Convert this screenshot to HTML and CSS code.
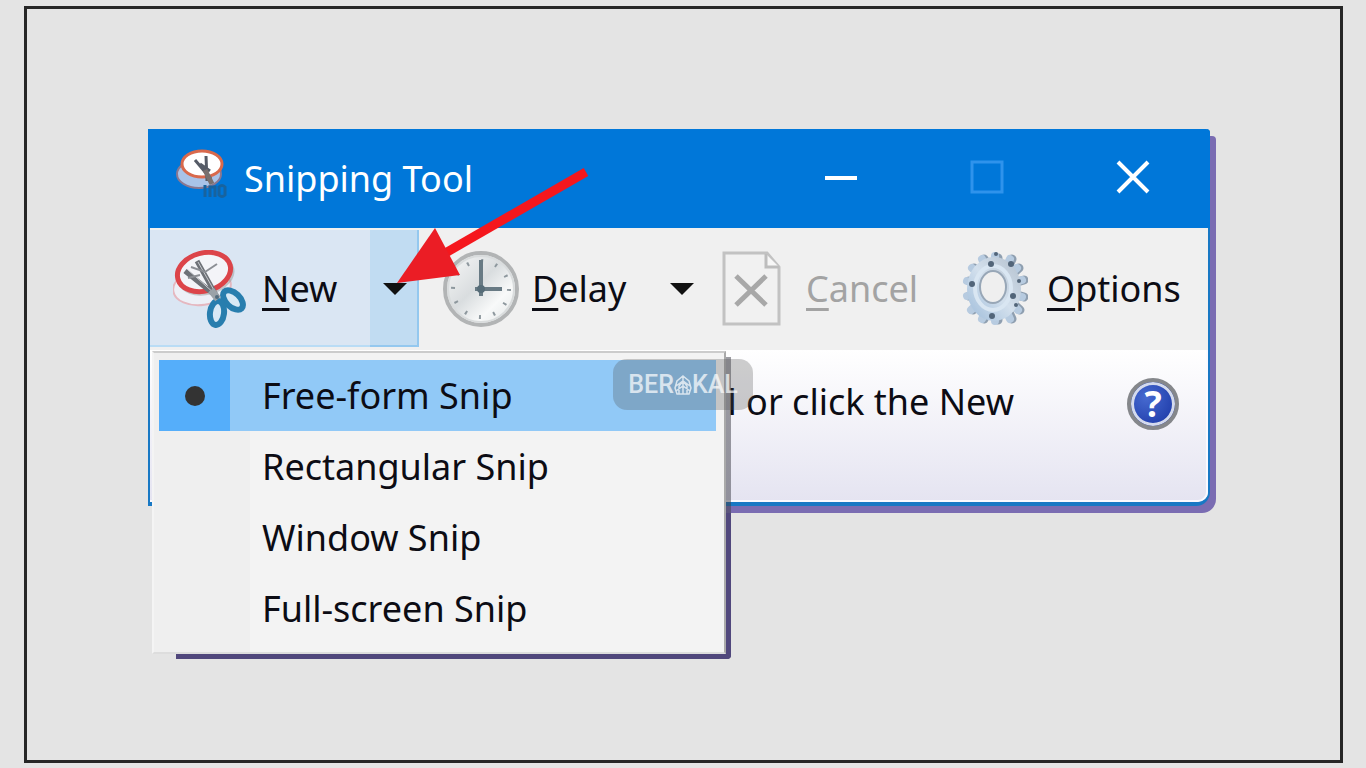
FILE: index.html
```html
<!DOCTYPE html>
<html lang="en">
<head>
    <meta charset="UTF-8">
    <meta name="viewport" content="width=device-width, initial-scale=1.0">
    <title>Snipping Tool</title>
    <link rel="stylesheet" href="styles.css">
</head>
<body>
    <main class="frame">
        <section class="window">
            <header class="title-bar">
                <svg class="app-icon" viewBox="0 0 52 52">
                    <ellipse cx="23" cy="25" rx="22" ry="14" fill="#a9c3e8" stroke="#8b7790" stroke-width="2"/>
                    <ellipse cx="26" cy="15" rx="20" ry="13" fill="#fff" stroke="#d9694c" stroke-width="3"/>
                    <path d="M19 11l16 19M30 7l1 25M24 15l10 7" stroke="#555b66" stroke-width="3" fill="none"/>
                    <path d="M29 21l7 14" stroke="#79706f" stroke-width="5"/>
                    <path d="M29 36v12M34 48V38h5v10M43 37v9q3 3 6 0v-8q-3-3-6 0" stroke="#17639f" stroke-width="3" fill="none"/>
                </svg>
                <h1>Snipping Tool</h1>
                <div class="window-buttons">
                    <button type="button" aria-label="Minimize">
                        <svg viewBox="0 0 34 34"><path d="M1 18h32" stroke="#fff" stroke-width="4"/></svg>
                    </button>
                    <button type="button" aria-label="Maximize" disabled>
                        <svg viewBox="0 0 34 34"><rect x="2" y="2" width="30" height="30" fill="none" stroke="#2f93ec" stroke-width="3"/></svg>
                    </button>
                    <button type="button" aria-label="Close">
                        <svg viewBox="0 0 34 34"><path d="M2 2l30 30M32 2L2 32" stroke="#fff" stroke-width="4"/></svg>
                    </button>
                </div>
            </header>

            <div class="toolbar">
                <button type="button" class="tool tool-new">
                    <svg class="icon-new" viewBox="0 0 74 78">
                        <ellipse cx="29" cy="37" rx="29" ry="18" fill="#edf0f7" stroke="#e5b8c0" stroke-width="2" transform="rotate(-8 29 37)"/>
                        <ellipse cx="33" cy="25" rx="29" ry="20" fill="#999" opacity=".5" transform="rotate(-15 33 25)"/>
                        <ellipse cx="31" cy="22" rx="27" ry="19" fill="#f3f4f8" stroke="#dc4449" stroke-width="5" transform="rotate(-15 31 22)"/>
                        <path d="M12 21l31 25M24 11l20 36" stroke="#6d7177" stroke-width="5"/>
                        <path d="M14 19l28 25M25 12l17 30" stroke="#c8cbd0" stroke-width="1"/>
                        <path d="M15 28l12-3M18 17l14 5 12-8" stroke="#8b8e94" stroke-width="2" fill="none"/>
                        <ellipse cx="60" cy="50" rx="7" ry="12" fill="#d8e9f5" stroke="#287eae" stroke-width="6" transform="rotate(-46 60 50)"/>
                        <ellipse cx="44" cy="63" rx="7" ry="12" fill="#d8e9f5" stroke="#287eae" stroke-width="6" transform="rotate(7 44 63)"/>
                        <path d="M38 40l7 9" stroke="#9ba2a8" stroke-width="7"/>
                        <circle cx="44" cy="47" r="2" fill="#536b7c"/>
                    </svg>
                    <span><u>N</u>ew</span>
                </button>
                <button type="button" class="split split-open" aria-label="New snip mode">
                    <svg class="caret" viewBox="0 0 24 12"><path d="M0 0h24L12 12z" fill="#111"/></svg>
                </button>
                <button type="button" class="tool tool-delay">
                    <svg class="icon-delay" viewBox="0 0 76 76">
                        <defs>
                            <linearGradient id="face" x1="0" y1="0" x2="1" y2="1">
                                <stop offset="0" stop-color="#fafafa"/>
                                <stop offset=".45" stop-color="#d9dddf"/>
                                <stop offset=".7" stop-color="#f8f9f9"/>
                                <stop offset="1" stop-color="#dfe3e5"/>
                            </linearGradient>
                        </defs>
                        <circle cx="38" cy="38" r="36" fill="url(#face)" stroke="#b2b4b5" stroke-width="4"/>
                        <circle cx="38" cy="38" r="33" fill="none" stroke="#d9dcdd" stroke-width="2"/>
                        <circle cx="38" cy="38" r="28" fill="none" stroke="#8e989e" stroke-width="4" stroke-dasharray="2 12.66"/>
                        <path d="M38 9v36M32 38h27" stroke="#687a84" stroke-width="4"/>
                        <circle cx="38" cy="38" r="4" fill="#566c78"/>
                    </svg>
                    <span><u>D</u>elay</span>
                </button>
                <button type="button" class="split" aria-label="Delay time">
                    <svg class="caret" viewBox="0 0 24 12"><path d="M0 0h24L12 12z" fill="#111"/></svg>
                </button>
                <button type="button" class="tool tool-cancel" disabled>
                    <svg class="icon-cancel" viewBox="0 0 59 76">
                        <path d="M2 2h43l12 14v57H2z" fill="#f1f1f1" stroke="#c2c2c2" stroke-width="3"/>
                        <path d="M44 3v13h13" fill="#f7f7f7" stroke="#bdbdbd" stroke-width="3"/>
                        <path d="M14 25l30 29M44 25L14 54" stroke="#a8a8a8" stroke-width="5"/>
                    </svg>
                    <span><u>C</u>ancel</span>
                </button>
                <button type="button" class="tool tool-options">
                    <svg class="icon-options" viewBox="0 0 66 78">
                        <defs>
                            <linearGradient id="metal" x1="0" y1="1" x2="1" y2="0">
                                <stop offset="0" stop-color="#9dbbd9"/>
                                <stop offset=".5" stop-color="#d3e0ed"/>
                                <stop offset="1" stop-color="#b3bfcc"/>
                            </linearGradient>
                        </defs>
                        <g id="teeth" fill="none" stroke="#8f9fb0" stroke-width="9" stroke-linecap="round">
                            <path d="M36 8v62M22 9l28 60M12 18l46 42M7 31l55 16M7 46l55-16M11 60l46-42M22 69L50 9"/>
                        </g>
                        <g fill="none" stroke="#b7cbe0" stroke-width="8" stroke-linecap="round">
                            <path d="M33 6v65M20 9l28 60M10 18l46 42M5 31l55 16M5 46l55-16M9 60l46-42M20 69L48 9"/>
                        </g>
                        <ellipse cx="32" cy="39" rx="27" ry="32" fill="url(#metal)"/>
                        <ellipse cx="31" cy="38" rx="18" ry="22" fill="none" stroke="#d9e6f2" stroke-width="4"/>
                        <ellipse cx="31" cy="37" rx="13" ry="16" fill="#efefef" stroke="#98a7b7" stroke-width="2"/>
                        <g fill="#526579">
                            <circle cx="29" cy="14" r="3"/><circle cx="10" cy="34" r="3"/>
                            <circle cx="51" cy="46" r="3"/><circle cx="30" cy="66" r="3"/>
                            <circle cx="49" cy="14" r="3"/><circle cx="34" cy="4" r="2"/>
                            <circle cx="54" cy="55" r="2"/><circle cx="57" cy="31" r="2"/>
                        </g>
                    </svg>
                    <span><u>O</u>ptions</span>
                </button>
            </div>

            <div class="hint">
                <p>l or click the New</p>
                <button type="button" class="help" aria-label="Help">?</button>
            </div>

            <!-- snip mode menu -->
            <form class="menu">
                <label><input type="radio" name="mode" checked><span>Free-form Snip</span></label>
                <label><input type="radio" name="mode"><span>Rectangular Snip</span></label>
                <label><input type="radio" name="mode"><span>Window Snip</span></label>
                <label><input type="radio" name="mode"><span>Full-screen Snip</span></label>
            </form>

            <svg class="arrow" viewBox="0 0 194 116">
                <path d="M189 4L45 87" stroke="#f5171d" stroke-width="9"/>
                <path d="M0 115L38 60 63 107z" fill="#eb1d25"/>
            </svg>

            <div class="watermark">
                <span>BER</span>
                <svg viewBox="0 0 18 20">
                    <path d="M9 1l6 5 2 7-2 6H3l-2-6 2-7zM9 1v18M5 19v-8l4-5 4 5v8M2 11l7-5 7 5M2 16l7-5 7 5" fill="none" stroke="#fff" stroke-width="1.5"/>
                </svg>
                <span>KAL</span>
            </div>
        </section>
    </main>
</body>
</html>
```

FILE: styles.css
```css
* {
    box-sizing: border-box;
}
body {
    margin: 0;
    padding: 6px 23px 5px 24px;
    min-height: 100vh;
    display: flex;
    background: #e4e4e4;
    color: #0c0c14;
    font-family: "Noto Sans", "Open Sans", sans-serif;
    font-size: 36px;
    line-height: 48px;
}
button {
    margin: 0;
    padding: 0;
    border: none;
    background: none;
    color: inherit;
    font: inherit;
}
svg {
    display: block;
    flex: none;
}
.frame {
    flex: 1;
    padding: 120px 130px 0 121px;
    border: 3px solid #262626;
}
.window {
    position: relative;
    border: solid #1878c4;
    border-width: 0 2px 4px;
    border-radius: 0 4px 14px 0;
    background: #f0f0f0;
    box-shadow: 6px 7px 0 #7a6cb2;
}

/* title bar */
.title-bar {
    display: flex;
    align-items: center;
    height: 99px;
    margin: 0 -2px;
    padding: 0 4px 0 28px;
    border-radius: 0 4px 0 0;
    background: #0077d9;
    color: #fff;
}
.app-icon {
    width: 52px;
    height: 52px;
    margin-bottom: 8px;
}
.title-bar h1 {
    flex: 1;
    margin: 0 0 0 16px;
    font-size: 36px;
    font-weight: 400;
}
.window-buttons {
    display: flex;
    align-self: flex-start;
}
.window-buttons button {
    display: flex;
    align-items: center;
    justify-content: center;
    width: 146px;
    height: 96px;
}
.window-buttons svg {
    width: 34px;
    height: 34px;
}

/* toolbar */
.toolbar {
    display: grid;
    grid-template-columns: 220fr 49fr 238fr 50fr 239fr 262fr;
    height: 122px;
    padding: 2px 0 3px;
}
.tool {
    display: flex;
    align-items: center;
    white-space: nowrap;
}
.tool u {
    text-decoration-thickness: 3px;
    text-underline-offset: 6px;
}
.tool-new {
    gap: 15px;
    padding-left: 23px;
    background: #dae6f3;
    box-shadow: inset 0 -2px 0 #b9dcf5;
}
.tool-delay {
    gap: 13px;
    padding-left: 24px;
}
.tool-cancel {
    gap: 25px;
    padding-left: 15px;
    color: #a3a3a3;
}
.tool-options {
    gap: 19px;
    padding-left: 16px;
}
.icon-new {
    width: 74px;
    height: 78px;
}
.icon-delay {
    width: 76px;
    height: 76px;
}
.icon-cancel {
    width: 59px;
    height: 76px;
}
.icon-options {
    width: 66px;
    height: 78px;
}
.split {
    display: flex;
    align-items: center;
    justify-content: center;
}
.split-open {
    background: #c1dcf2;
    box-shadow: inset -2px -2px 0 #94c8ef;
}
.caret {
    width: 24px;
    height: 12px;
}

/* hint area */
.hint {
    display: flex;
    align-items: flex-start;
    justify-content: flex-end;
    gap: 113px;
    height: 152px;
    padding: 28px 27px 0 0;
    border: solid #fafaff;
    border-width: 0 2px 2px 0;
    border-radius: 0 0 10px 0;
    background: linear-gradient(#fff, #e5e4f1);
}
.hint p {
    margin: 0;
}
.help {
    width: 52px;
    height: 52px;
    border: 4px solid #85878b;
    border-radius: 50%;
    background: radial-gradient(circle at 35% 35%, #466ad0, #1530a0);
    box-shadow: inset 0 0 0 3px #d4daed;
    color: #fff;
    font-size: 36px;
    font-weight: 700;
    line-height: 44px;
}

/* drop-down menu */
.menu {
    position: absolute;
    top: 222px;
    left: 2px;
    width: 574px;
    padding: 7px 8px 8px 5px;
    border: 2px solid #ccc;
    border-color: #ccc #aaa #ddd #f4f4f4;
    background: linear-gradient(90deg, #efefef 96px, #f3f3f3 96px);
}
.menu::before,
.menu::after {
    content: "";
    position: absolute;
    right: -7px;
    bottom: -7px;
}
.menu::before {
    left: 22px;
    height: 5px;
    border-radius: 0 0 4px 0;
    background: #50477c;
}
.menu::after {
    top: 4px;
    width: 5px;
    border-radius: 0 0 4px 0;
    background: linear-gradient(rgba(60, 60, 70, 0.5) 156px, #50477c 156px);
}
.menu label {
    display: flex;
    align-items: center;
    height: 71px;
}
.menu input {
    appearance: none;
    display: flex;
    align-items: center;
    justify-content: center;
    width: 71px;
    height: 71px;
    margin: 0 32px 0 0;
}
.menu label:has(:checked) {
    background: #91c9f7;
}
.menu input:checked {
    background: #55aefa;
}
.menu input:checked::before {
    content: "";
    width: 20px;
    height: 20px;
    border-radius: 50%;
    background: #333;
}

/* overlays */
.arrow {
    position: absolute;
    top: 39px;
    left: 247px;
    width: 194px;
    height: 116px;
    pointer-events: none;
}
.watermark {
    position: absolute;
    top: 230px;
    left: 463px;
    display: flex;
    align-items: center;
    justify-content: center;
    width: 140px;
    height: 51px;
    border-radius: 14px;
    background: rgba(80, 80, 80, 0.28);
    color: #fff;
    font-family: Roboto, sans-serif;
    font-size: 25px;
    font-weight: 500;
    line-height: 32px;
}
.watermark span,
.watermark svg {
    opacity: 0.7;
}
.watermark svg {
    width: 18px;
    height: 20px;
}
```
